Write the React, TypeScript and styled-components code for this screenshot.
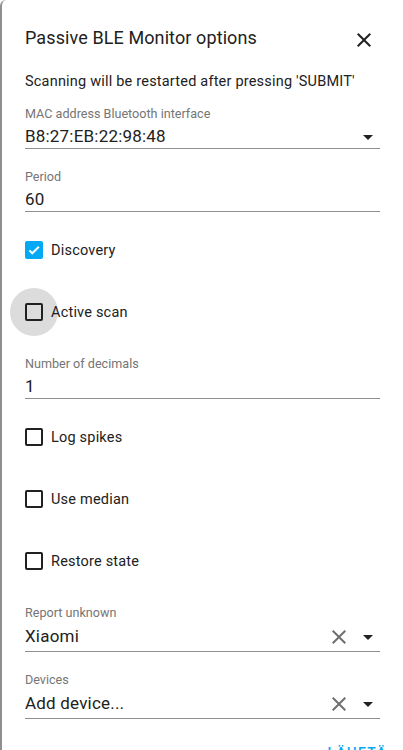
import React from 'react';
import styled, { createGlobalStyle } from 'styled-components';

const GlobalStyle = createGlobalStyle`
  html, body {
    margin: 0;
    padding: 0;
    background: #fff;
    overflow: hidden;
  }
  body {
    font-family: Roboto, 'Noto Sans', sans-serif;
    color: #212121;
  }
`;

interface FieldProps {
  label: string;
  value: string;
  select?: boolean;
  clearable?: boolean;
  first?: boolean;
}

interface CheckProps {
  label: string;
  checked?: boolean;
  focused?: boolean;
}

const CloseIcon = ({ color = '#212121' }: { color?: string }) => (
  <svg width="24" height="24" viewBox="0 0 24 24">
    <path
      fill={color}
      d="M19 6.41L17.59 5 12 10.59 6.41 5 5 6.41 10.59 12 5 17.59 6.41 19 12 13.41 17.59 19 19 17.59 13.41 12z"
    />
  </svg>
);

const ArrowIcon = () => (
  <svg width="24" height="24" viewBox="0 0 24 24">
    <path fill="#212121" d="M7 10l5 5 5-5z" />
  </svg>
);

function Field({ label, value, select, clearable, first }: FieldProps) {
  return (
    <FieldWrap $first={first}>
      <Label>{label}</Label>
      <ValueRow $tall={clearable}>
        <Value>{value}</Value>
        {clearable && (
          <Icon>
            <CloseIcon color="#6f6f6f" />
          </Icon>
        )}
        {select && (
          <Icon>
            <ArrowIcon />
          </Icon>
        )}
      </ValueRow>
    </FieldWrap>
  );
}

function Check({ label, checked, focused }: CheckProps) {
  return (
    <CheckRow>
      <BoxWrap>
        {focused && <Ripple />}
        <Box $checked={checked}>
          {checked && (
            <svg width="14" height="14" viewBox="0 0 24 24">
              <path
                fill="none"
                stroke="#fff"
                strokeWidth="3.4"
                d="M4.1 12.7L9 17.6 20.3 6.3"
              />
            </svg>
          )}
        </Box>
      </BoxWrap>
      <CheckLabel>{label}</CheckLabel>
    </CheckRow>
  );
}

export default function App() {
  return (
    <>
      <GlobalStyle />
      <Dialog>
        <Content>
          <TitleRow>
            <Title>Passive BLE Monitor options</Title>
            <CloseButton>
              <CloseIcon />
            </CloseButton>
          </TitleRow>
          <Subtitle>Scanning will be restarted after pressing 'SUBMIT'</Subtitle>
          <Field first label="MAC address Bluetooth interface" value="B8:27:EB:22:98:48" select />
          <Field label="Period" value="60" />
          <Check label="Discovery" checked />
          <Check label="Active scan" focused />
          <Field label="Number of decimals" value="1" />
          <Check label="Log spikes" />
          <Check label="Use median" />
          <Check label="Restore state" />
          <Field label="Report unknown" value="Xiaomi" select clearable />
          <Field label="Devices" value="Add device..." select clearable />
        </Content>
        <Footer>
          <SubmitButton>Lähetä</SubmitButton>
        </Footer>
      </Dialog>
    </>
  );
}

const Dialog = styled.div`
  display: flex;
  flex-direction: column;
  min-height: 800px;
  border-left: 2px solid #8f8f8f;
  border-top-left-radius: 6px;
  background: #fff;
`;

const Content = styled.div`
  display: flex;
  flex-direction: column;
  padding: 26px 23px 0 23px;
`;

const TitleRow = styled.div`
  display: flex;
  align-items: center;
  justify-content: space-between;
  height: 24px;
`;

const Title = styled.h2`
  margin: 0;
  font-size: 18px;
  line-height: 24px;
  font-weight: 400;
  letter-spacing: 0.1px;
`;

const CloseButton = styled.div`
  display: flex;
  margin: 4px 4px 0 0;
`;

const Subtitle = styled.div`
  margin-top: 22px;
  font-size: 14.5px;
  line-height: 20px;
  letter-spacing: 0.2px;
`;

const FieldWrap = styled.div<{ $first?: boolean }>`
  display: flex;
  flex-direction: column;
  margin-top: ${(p) => (p.$first ? 14 : 20)}px;
  border-bottom: 1px solid #8f8f8f;
`;

const Label = styled.div`
  font-size: 12.6px;
  line-height: 16px;
  color: #757575;
`;

const ValueRow = styled.div<{ $tall?: boolean }>`
  display: flex;
  align-items: center;
  margin-top: ${(p) => (p.$tall ? 3 : 2)}px;
  padding-bottom: ${(p) => (p.$tall ? 3 : 0)}px;
  height: 24px;
`;

const Value = styled.div`
  flex: 1;
  font-size: 17px;
  line-height: 24px;
  letter-spacing: 0.2px;
`;

const Icon = styled.div`
  display: flex;
  margin-left: 5px;
  margin-top: 2px;
`;

const CheckRow = styled.div`
  display: flex;
  align-items: center;
  gap: 8px;
  height: 48px;
  margin-top: 14px;
`;

const BoxWrap = styled.div`
  position: relative;
  width: 18px;
  height: 18px;
`;

const Box = styled.div<{ $checked?: boolean }>`
  position: relative;
  display: flex;
  align-items: center;
  justify-content: center;
  box-sizing: border-box;
  width: 18px;
  height: 18px;
  border-radius: 2px;
  border: 2px solid ${(p) => (p.$checked ? '#03a9f4' : '#212121')};
  background: ${(p) => (p.$checked ? '#03a9f4' : 'transparent')};
`;

const Ripple = styled.span`
  position: absolute;
  left: 50%;
  top: 50%;
  width: 48px;
  height: 48px;
  margin: -24px 0 0 -24px;
  border-radius: 50%;
  background: #dcdcdc;
`;

const CheckLabel = styled.span`
  position: relative;
  font-size: 14.5px;
  letter-spacing: 0.2px;
`;

const Footer = styled.div`
  display: flex;
  justify-content: flex-end;
  padding: 16px 8px 8px 0;
`;

const SubmitButton = styled.button`
  height: 36px;
  padding: 0 8px;
  border: none;
  background: none;
  font-family: Roboto, sans-serif;
  font-size: 14px;
  font-weight: 500;
  letter-spacing: 1.25px;
  text-transform: uppercase;
  color: #03a9f4;
`;
